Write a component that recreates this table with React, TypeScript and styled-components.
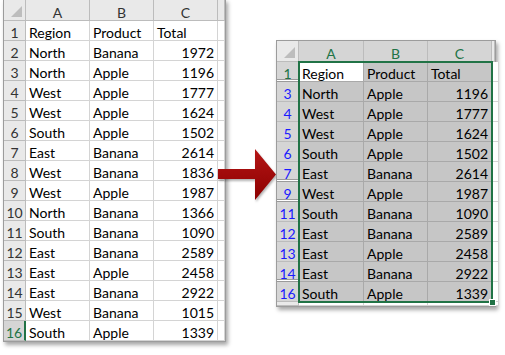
import React from "react";
import styled, { createGlobalStyle } from "styled-components";

type Row = { num: number; region: string; product: string; total: string; gapAfter?: boolean };

const leftRows: Row[] = [
  { num: 1, region: "Region", product: "Product", total: "Total" },
  { num: 2, region: "North", product: "Banana", total: "1972" },
  { num: 3, region: "North", product: "Apple", total: "1196" },
  { num: 4, region: "West", product: "Apple", total: "1777" },
  { num: 5, region: "West", product: "Apple", total: "1624" },
  { num: 6, region: "South", product: "Apple", total: "1502" },
  { num: 7, region: "East", product: "Banana", total: "2614" },
  { num: 8, region: "West", product: "Banana", total: "1836" },
  { num: 9, region: "West", product: "Apple", total: "1987" },
  { num: 10, region: "North", product: "Banana", total: "1366" },
  { num: 11, region: "South", product: "Banana", total: "1090" },
  { num: 12, region: "East", product: "Banana", total: "2589" },
  { num: 13, region: "East", product: "Apple", total: "2458" },
  { num: 14, region: "East", product: "Banana", total: "2922" },
  { num: 15, region: "West", product: "Banana", total: "1015" },
  { num: 16, region: "South", product: "Apple", total: "1339" },
];

// rows left after filtering, hidden rows marked with gapAfter
const hidden = [2, 8, 10, 15];
const rightRows: Row[] = leftRows
  .filter((r) => !hidden.includes(r.num))
  .map((r) => ({ ...r, gapAfter: hidden.includes(r.num + 1) }));

const GREEN = "#217346";

const GlobalStyle = createGlobalStyle`
  html, body { margin: 0; padding: 0; background: #fff; }
  body { font-family: "Lato", "Liberation Sans", sans-serif; }
`;

const Page = styled.div`
  display: flex;
  align-items: flex-start;
  width: 505px;
  height: 355px;
  overflow: hidden;
`;

const Sheet = styled.div<{ $cols: string; $rows: string }>`
  position: relative;
  display: grid;
  grid-template-columns: ${(p) => p.$cols};
  grid-template-rows: ${(p) => p.$rows};
  border: 1px solid #9c9c9c;
  background: #fff;
  box-shadow: 2px 3px 4px rgba(0, 0, 0, 0.35);
`;

const LeftSheet = styled(Sheet)`
  margin: -1px 0 0 3px;
`;

const RightSheet = styled(Sheet)`
  margin-top: 40px;
`;

const HeadCell = styled.div<{ $sel?: boolean; $color?: string; $edge?: boolean; $gap?: boolean }>`
  position: relative;
  box-sizing: border-box;
  display: flex;
  align-items: flex-end;
  justify-content: center;
  background: ${(p) => (p.$sel ? "#d5d5d5" : "#e9e9e9")};
  color: ${(p) => p.$color || "#333"};
  border-right: ${(p) => (p.$edge ? `2px solid ${GREEN}` : "1px solid #bcbcbc")};
  border-bottom: 1px solid ${(p) => (p.$gap ? "#9a9a9a" : "#bcbcbc")};
  font-size: 14px;
  line-height: 14px;

  &::before {
    content: "";
    display: ${(p) => (p.$gap ? "block" : "none")};
    position: absolute;
    left: 0;
    right: 0;
    bottom: 0;
    height: 1px;
    background: #fff;
    border-top: 1px solid #9a9a9a;
  }
`;

const Corner = styled(HeadCell)`
  &::after {
    content: "";
    position: absolute;
    right: 3px;
    bottom: 3px;
    border-left: 11px solid transparent;
    border-bottom: 11px solid #bdbdbd;
  }
`;

const Cell = styled.div<{ $right?: boolean; $sel?: boolean; $active?: boolean }>`
  box-sizing: border-box;
  display: flex;
  align-items: flex-end;
  justify-content: ${(p) => (p.$right ? "flex-end" : "flex-start")};
  padding: 0 3px;
  background: ${(p) => (p.$sel && !p.$active ? "#c6c6c6" : "#fff")};
  border-right: 1px solid ${(p) => (p.$sel ? "#a9a9a9" : "#d4d4d4")};
  border-bottom: 1px solid ${(p) => (p.$sel ? "#a9a9a9" : "#d4d4d4")};
  color: #000;
  font-size: 14px;
  line-height: 14px;
  white-space: nowrap;
  overflow: hidden;
`;

const Selection = styled.div`
  position: absolute;
  left: 21px;
  top: 20px;
  width: 195px;
  height: 242px;
  box-sizing: border-box;
  border: 2px solid ${GREEN};
  pointer-events: none;

  &::after {
    content: "";
    position: absolute;
    right: -5px;
    bottom: -5px;
    width: 5px;
    height: 5px;
    background: ${GREEN};
    border: 1px solid #fff;
  }
`;

const ArrowBox = styled.div`
  margin: 140px 0 0 -8px;
  width: 58px;
  height: 66px;
  svg {
    display: block;
    filter: drop-shadow(1px 2px 1px rgba(0, 0, 0, 0.3));
  }
`;

const Arrow = () => (
  <ArrowBox>
    <svg width="58" height="66" viewBox="0 0 58 66">
      <defs>
        <linearGradient id="arrowFill" x1="0" y1="0" x2="0" y2="1">
          <stop offset="0" stopColor="#b41616" />
          <stop offset="1" stopColor="#8c0000" />
        </linearGradient>
      </defs>
      <path d="M0 29 H37 V9 L58 34.5 L37 60 V39 H0 Z" fill="url(#arrowFill)" />
    </svg>
  </ArrowBox>
);

const letters = ["A", "B", "C"];

const LeftTable = () => (
  <LeftSheet $cols="22px 64px 64px 64px 7px" $rows={`21px repeat(${leftRows.length}, 20px)`}>
    <Corner />
    {letters.map((l) => (
      <HeadCell key={l}>{l}</HeadCell>
    ))}
    <HeadCell />
    {leftRows.map((r) => {
      const last = r.num === 16;
      return (
        <React.Fragment key={r.num}>
          <HeadCell $sel={last} $edge={last} $color={last ? GREEN : undefined}>
            {r.num}
          </HeadCell>
          <Cell>{r.region}</Cell>
          <Cell>{r.product}</Cell>
          <Cell $right={r.num !== 1}>{r.total}</Cell>
          <Cell />
        </React.Fragment>
      );
    })}
  </LeftSheet>
);

const RightTable = () => (
  <RightSheet $cols="22px 65px 64px 64px 3px" $rows={`21px repeat(${rightRows.length}, 20px) 4px`}>
    <Corner />
    {letters.map((l) => (
      <HeadCell key={l} $sel $color={GREEN}>
        {l}
      </HeadCell>
    ))}
    <HeadCell />
    {rightRows.map((r) => (
      <React.Fragment key={r.num}>
        <HeadCell $sel $gap={r.gapAfter} $color={r.num === 1 ? GREEN : "#1a1aff"}>
          {r.num}
        </HeadCell>
        <Cell $sel $active={r.num === 1}>
          {r.region}
        </Cell>
        <Cell $sel>{r.product}</Cell>
        <Cell $sel $right={r.num !== 1}>
          {r.total}
        </Cell>
        <Cell />
      </React.Fragment>
    ))}
    <HeadCell />
    <Cell />
    <Cell />
    <Cell />
    <Cell />
    <Selection />
  </RightSheet>
);

export default function App() {
  return (
    <>
      <GlobalStyle />
      <Page>
        <LeftTable />
        <Arrow />
        <RightTable />
      </Page>
    </>
  );
}
